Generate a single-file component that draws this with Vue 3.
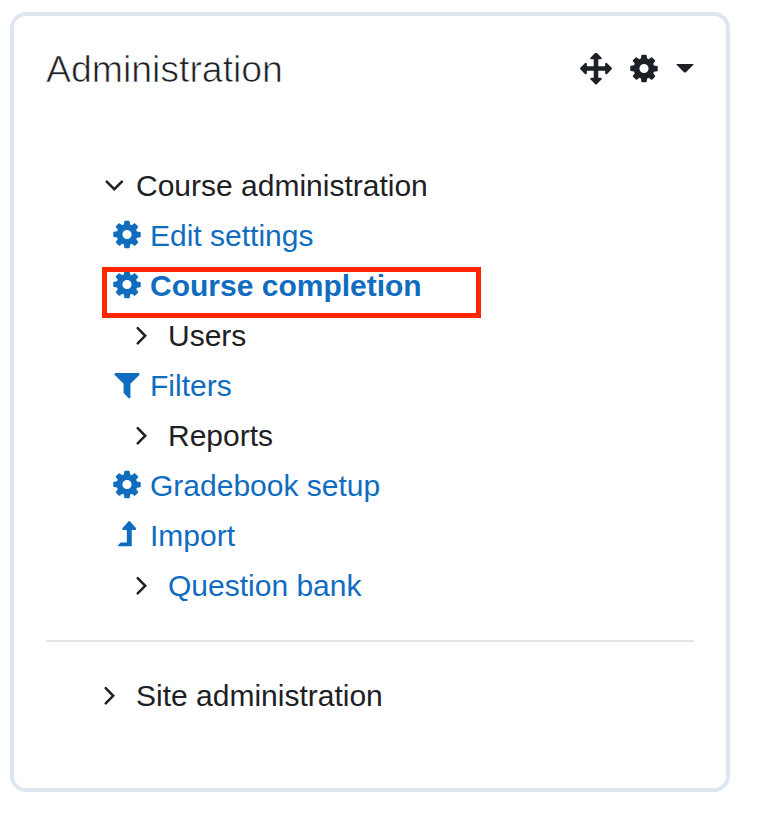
<template>
  <section class="block">
    <header class="block-header">
      <h2 class="title">Administration</h2>
      <div class="controls">
        <svg class="icon" viewBox="0 28 1792 1792"><path :d="icons.arrows" /></svg>
        <svg class="icon" viewBox="0 28 1792 1792"><path :d="icons.cog" /></svg>
        <svg class="caret" viewBox="0 0 18 9"><path d="M1 0h16q1 0 .4.8L10 8.200q-1 .8-2 0L.6.8Q0 0 1 0z" /></svg>
      </div>
    </header>

    <nav class="tree">
      <div
        v-for="item in items"
        :key="item.label"
        class="row"
        :class="{ link: item.link, active: item.active, leaf: item.icon, nested: item.nested }"
      >
        <svg v-if="item.icon" class="icon" viewBox="0 28 1792 1792">
          <path :d="icons[item.icon]" />
        </svg>
        <svg v-else class="chevron" viewBox="0 0 24 24">
          <path :d="item.open ? chevronDown : chevronRight" />
        </svg>
        <span class="label">{{ item.label }}</span>
      </div>
    </nav>

    <hr class="divider" />

    <nav class="tree">
      <div class="row">
        <svg class="chevron" viewBox="0 0 24 24"><path :d="chevronRight" /></svg>
        <span class="label">Site administration</span>
      </div>
    </nav>
  </section>
</template>

<script setup>
const items = [
  { label: 'Course administration', open: true },
  { label: 'Edit settings', icon: 'cog', link: true },
  { label: 'Course completion', icon: 'cog', link: true, active: true },
  { label: 'Users', nested: true },
  { label: 'Filters', icon: 'filter', link: true },
  { label: 'Reports', nested: true },
  { label: 'Gradebook setup', icon: 'cog', link: true },
  { label: 'Import', icon: 'levelUp', link: true },
  { label: 'Question bank', nested: true, link: true },
];

const chevronDown = 'M4.700 8.700l7.600 7.500 7.600-7.500';
const chevronRight = 'M3.700 5.200l7.500 7.600-7.500 7.600';

const icons = {
  arrows: 'M1792 896q0 26-19 45l-256 256q-19 19-45 19t-45-19-19-45v-128h-384v384h128q26 0 45 19t19 45-19 45l-256 256q-19 19-45 19t-45-19l-256-256q-19-19-19-45t19-45 45-19h128v-384h-384v128q0 26-19 45t-45 19-45-19l-256-256q-19-19-19-45t19-45l256-256q19-19 45-19t45 19 19 45v128h384v-384h-128q-26 0-45-19t-19-45 19-45l256-256q19-19 45-19t45 19l256 256q19 19 19 45t-19 45-45 19h-128v384h384v-128q0-26 19-45t45-19 45 19l256 256q19 19 19 45z',
  cog: 'M1152 896q0-106-75-181t-181-75-181 75-75 181 75 181 181 75 181-75 75-181zm512-109v222q0 12-8 23t-20 13l-185 28q-19 54-39 91 35 50 107 138 10 12 10 25t-9 23q-27 37-99 108t-94 71q-12 0-26-9l-138-108q-44 23-91 38-16 136-29 186-7 28-36 28h-222q-14 0-24.500-8.500t-11.500-21.500l-28-184q-49-16-90-37l-141 107q-10 9-25 9-14 0-25-11-126-114-165-168-7-10-7-23 0-12 8-23 15-21 51-66.500t54-70.500q-27-50-41-99l-183-27q-13-2-21-12.500t-8-23.500v-222q0-12 8-23t19-13l186-28q14-46 39-92-40-57-107-138-10-12-10-24 0-10 9-23 26-36 98.500-107.500t94.500-71.500q13 0 26 10l138 107q44-23 91-38 16-136 29-186 7-28 36-28h222q14 0 24.500 8.500t11.500 21.500l28 184q49 16 90 37l142-107q9-9 24-9 13 0 25 10 129 119 165 170 7 8 7 22 0 12-8 23-15 21-51 66.500t-54 70.500q26 50 41 98l183 28q13 2 21 12.500t8 23.500z',
  filter: 'M1595 295q17 41-14 70l-493 493v742q0 42-39 59-13 5-25 5-27 0-45-19l-256-256q-19-19-19-45v-486l-493-493q-31-29-14-70 17-39 59-39h1280q42 0 59 39z',
  levelUp: 'M1408 599q-16 41-58 41h-188v888q0 14-9 23t-23 9H416q-21 0-29-18-8-20 4-35l130-155q12-13 29-13h336V640H694q-42 0-58-41-14-37 13-68l325-369q22-26 48-26t48 26l325 369q27 31 13 68z',
};
</script>

<style>
body {
  background: #fff;
}
</style>

<style scoped>
.block {
  box-sizing: border-box;
  width: 720px;
  height: 780px;
  margin: 12px 0 0 10px;
  padding: 32px;
  border: 4px solid #dee6ef;
  border-radius: 16px;
  background: #fff;
  color: #1d2125;
  font-family: "Liberation Sans", Arial, sans-serif;
  font-size: 30px;
  line-height: 50px;
}

.block-header {
  display: flex;
  justify-content: space-between;
  align-items: center;
  height: 41px;
  margin-bottom: 71px;
}

/* outline in the background colour thins the heading */
.title {
  margin: 0;
  font-size: 37.5px;
  font-weight: 400;
  line-height: 44px;
  letter-spacing: -0.05px;
  -webkit-text-stroke: 0.7px #fff;
}

.controls {
  display: flex;
  align-items: center;
  gap: 16px;
}

.icon {
  flex: none;
  width: 32px;
  height: 32px;
  fill: currentColor;
}

.caret {
  width: 18px;
  height: 9px;
  fill: currentColor;
}

.row {
  position: relative;
  display: flex;
  align-items: center;
  gap: 10px;
  height: 50px;
  padding-left: 56px;
}

.row.leaf {
  gap: 7px;
  padding-left: 65px;
}

.row.nested {
  padding-left: 88px;
}

.chevron {
  flex: none;
  width: 24px;
  height: 24px;
  fill: none;
  stroke: #1d2125;
  stroke-width: 2.5;
  stroke-linecap: round;
}

.label {
  padding-top: 2px;
  white-space: nowrap;
}

.link {
  color: #0f6cbf;
}

.active {
  font-weight: 700;
}

.active::after {
  content: "";
  position: absolute;
  top: 7px;
  left: 56px;
  box-sizing: border-box;
  width: 379px;
  height: 51px;
  border: 5px solid #ff2600;
}

.divider {
  height: 2px;
  margin: 30px 0 28px;
  border: 0;
  background: #e3e3e3;
}
</style>
